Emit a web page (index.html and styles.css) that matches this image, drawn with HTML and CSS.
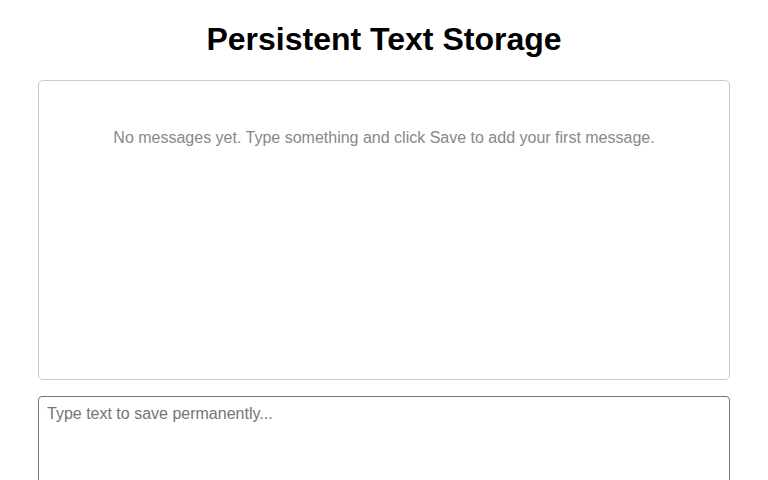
FILE: index.html
```html
<!DOCTYPE html>
<html lang="en">
<head>
<meta charset="utf-8">
<title>Persistent Text Storage</title>
<link rel="stylesheet" href="styles.css">
</head>
<body>
<div class="container">
  <h1 class="title">Persistent Text Storage</h1>
  <div class="messages">
    <p class="empty">No messages yet. Type something and click Save to add your first message.</p>
  </div>
  <textarea class="input" placeholder="Type text to save permanently..."></textarea>
</div>
</body>
</html>
```

FILE: styles.css
```css
html, body {
  margin: 0;
  padding: 0;
  background: #ffffff;
}
body {
  font-family: "Liberation Sans", Arial, sans-serif;
  color: #000;
}
.container {
  padding: 0 38px;
  display: flex;
  flex-direction: column;
}
.title {
  font-size: 32px;
  font-weight: bold;
  text-align: center;
  margin: 21px 0 22px;
  line-height: 37px;
}
.messages {
  box-sizing: border-box;
  height: 300px;
  border: 1px solid #cccccc;
  border-radius: 5px;
  padding: 48px 10px 10px;
}
.empty {
  margin: 0;
  color: #888888;
  font-size: 16px;
  line-height: 18px;
  text-align: center;
}
.input {
  box-sizing: border-box;
  margin-top: 16px;
  width: 100%;
  height: 120px;
  border: 1px solid #767676;
  border-radius: 4px;
  padding: 8px;
  font-family: "Liberation Sans", Arial, sans-serif;
  font-size: 16px;
  line-height: 18px;
  resize: vertical;
}
.input::placeholder {
  color: #757575;
}
```
